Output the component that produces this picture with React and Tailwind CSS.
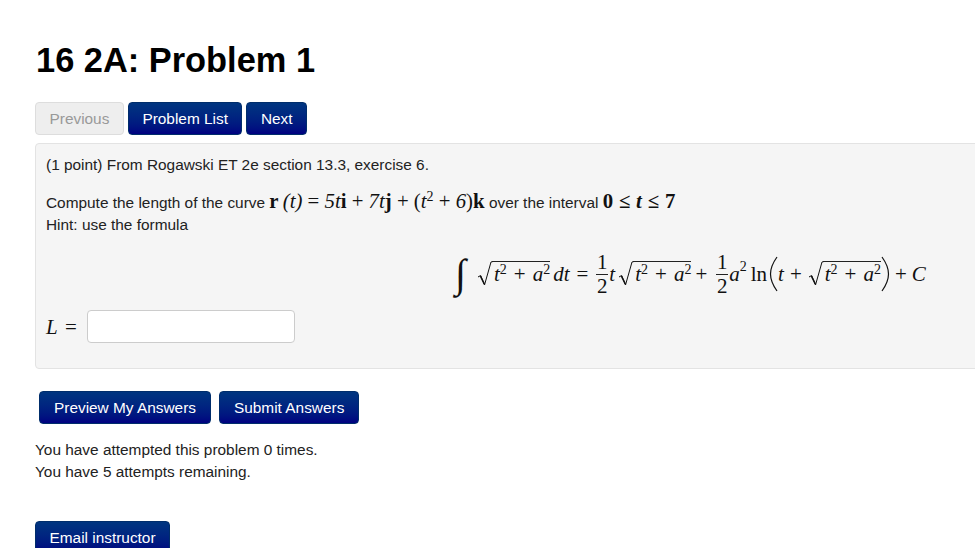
const btn =
  "h-[33px] rounded-[4px] border border-[#002d6b] bg-gradient-to-b from-[#003580] to-[#000080] text-[15.4px] leading-[20px] text-white";

// italic math variable
const I = ({ children }) => <i className="italic">{children}</i>;

const Sup = ({ children }) => (
  <sup className="top-[-7px] text-[14px] leading-none">{children}</sup>
);

// t² + a² under a radical sign
const Root = () => (
  <span className="inline-flex items-start">
    <svg width="16" height="26" viewBox="0 0 16 26" className="mr-[-1px]" fill="none" stroke="#111">
      <path d="M1 16 L3.6 14.5 L7.5 24 L14 1 L16 .5" strokeWidth="1" />
      <path d="M3.4 15 L7.3 23" strokeWidth="1.6" />
    </svg>
    <span className="border-t border-[#222] pl-[2px] leading-[25px] whitespace-nowrap">
      <I>t</I>
      <Sup>2</Sup>
      <span className="mx-[7px]">+</span>
      <I>a</I>
      <Sup>2</Sup>
    </span>
  </span>
);

const Half = () => (
  <span className="mx-[1px] inline-flex w-[12px] flex-col items-center text-[21px] leading-[21px]">
    <span className="pb-[1px]">1</span>
    <span className="h-px w-full bg-[#222]" />
    <span className="pt-[1px]">2</span>
  </span>
);

// tall thin bracket, flipped for the closing side
const Paren = ({ flip }) => (
  <svg width="9" height="36" viewBox="0 0 9 36" fill="none" stroke="#111" strokeWidth="1.2" className={flip ? "-scale-x-100" : ""}>
    <path d="M8 1 C3 8 1.5 13 1.5 18 C1.5 23 3 28 8 35" />
  </svg>
);

const App = () => {
  return (
    <div className="h-[548px] w-[975px] overflow-hidden bg-white pl-[35px] font-['Liberation_Sans',Arial,sans-serif] text-[15.4px] leading-[22px] text-[#222]">
      <h1 className="pt-[39px] pl-px text-[34.4px] leading-[42px] font-bold text-black">16 2A: Problem 1</h1>

      <div className="mt-[21px] flex gap-1">
        <button className="h-[33px] rounded-[4px] border border-[#ddd] bg-[#eee] px-[13.5px] text-[15.4px] leading-[20px] text-[#999]">
          Previous
        </button>
        <button className={`${btn} px-[13.5px]`}>Problem List</button>
        <button className={`${btn} px-[13.5px]`}>Next</button>
      </div>

      <div className="mt-2 h-[226px] w-[960px] rounded-[4px] border border-[#e3e3e3] bg-[#f5f5f5] pl-[10px]">
        <p className="pt-[10px]">(1 point) From Rogawski ET 2e section 13.3, exercise 6.</p>
        <p className="mt-[14px] flex items-baseline whitespace-nowrap">
          <span>Compute the length of the curve&nbsp;</span>
          <span className="font-['Liberation_Serif',serif] text-[20.8px] leading-[22px] text-[#111]">
            <b>r</b>
            <I>&thinsp;(t)</I> = <I>5t</I>
            <b>i</b> + <I>7t</I>
            <b>j</b> + (<I>t</I>
            <Sup>2</Sup> + <I>6</I>)<b>k</b>
          </span>
          <span>&nbsp;over the interval&nbsp;</span>
          <span className="font-['Liberation_Serif',serif] text-[20.8px] leading-[22px] font-bold tracking-[0.3px] text-[#111]">
            0 ≤ <I>t</I> ≤ 7
          </span>
        </p>
        <p>Hint: use the formula</p>

        <div className="mt-[13px] ml-[409px] flex h-[50px] items-center font-['Liberation_Serif',serif] text-[21px] whitespace-nowrap text-[#111]">
          <span className="mr-[11px] text-[40px] leading-none italic">∫</span>
          <Root />
          <span className="ml-[3px]">
            <I>dt</I>
          </span>
          <span className="mx-[7px]">=</span>
          <Half />
          <I>t</I>
          <span className="w-[3px]" />
          <Root />
          <span className="mr-[8px] ml-[4px]">+</span>
          <Half />
          <I>a</I>
          <Sup>2</Sup>
          <span className="mr-[2px] ml-[4px]">ln</span>
          <Paren />
          <I>t</I>
          <span className="mx-[6px]">+</span>
          <Root />
          <Paren flip />
          <span className="mx-[5px]">+</span>
          <I>C</I>
        </div>

        <div className="mt-[11px] flex items-center">
          <span className="font-['Liberation_Serif',serif] text-[21px] tracking-[1px] text-[#111]">
            <I>L</I> =
          </span>
          <input className="ml-[9px] h-[33px] w-[208px] rounded-[4px] border border-[#ccc] bg-white" />
        </div>
      </div>

      <div className="mt-[22px] ml-[4px] flex gap-2">
        <button className={`${btn} px-[14px]`}>Preview My Answers</button>
        <button className={`${btn} px-[14px]`}>Submit Answers</button>
      </div>

      <p className="mt-[15px]">You have attempted this problem 0 times.</p>
      <p>You have 5 attempts remaining.</p>

      <button className={`${btn} mt-[38px] px-[13.5px]`}>Email instructor</button>
    </div>
  );
};

export default App;
